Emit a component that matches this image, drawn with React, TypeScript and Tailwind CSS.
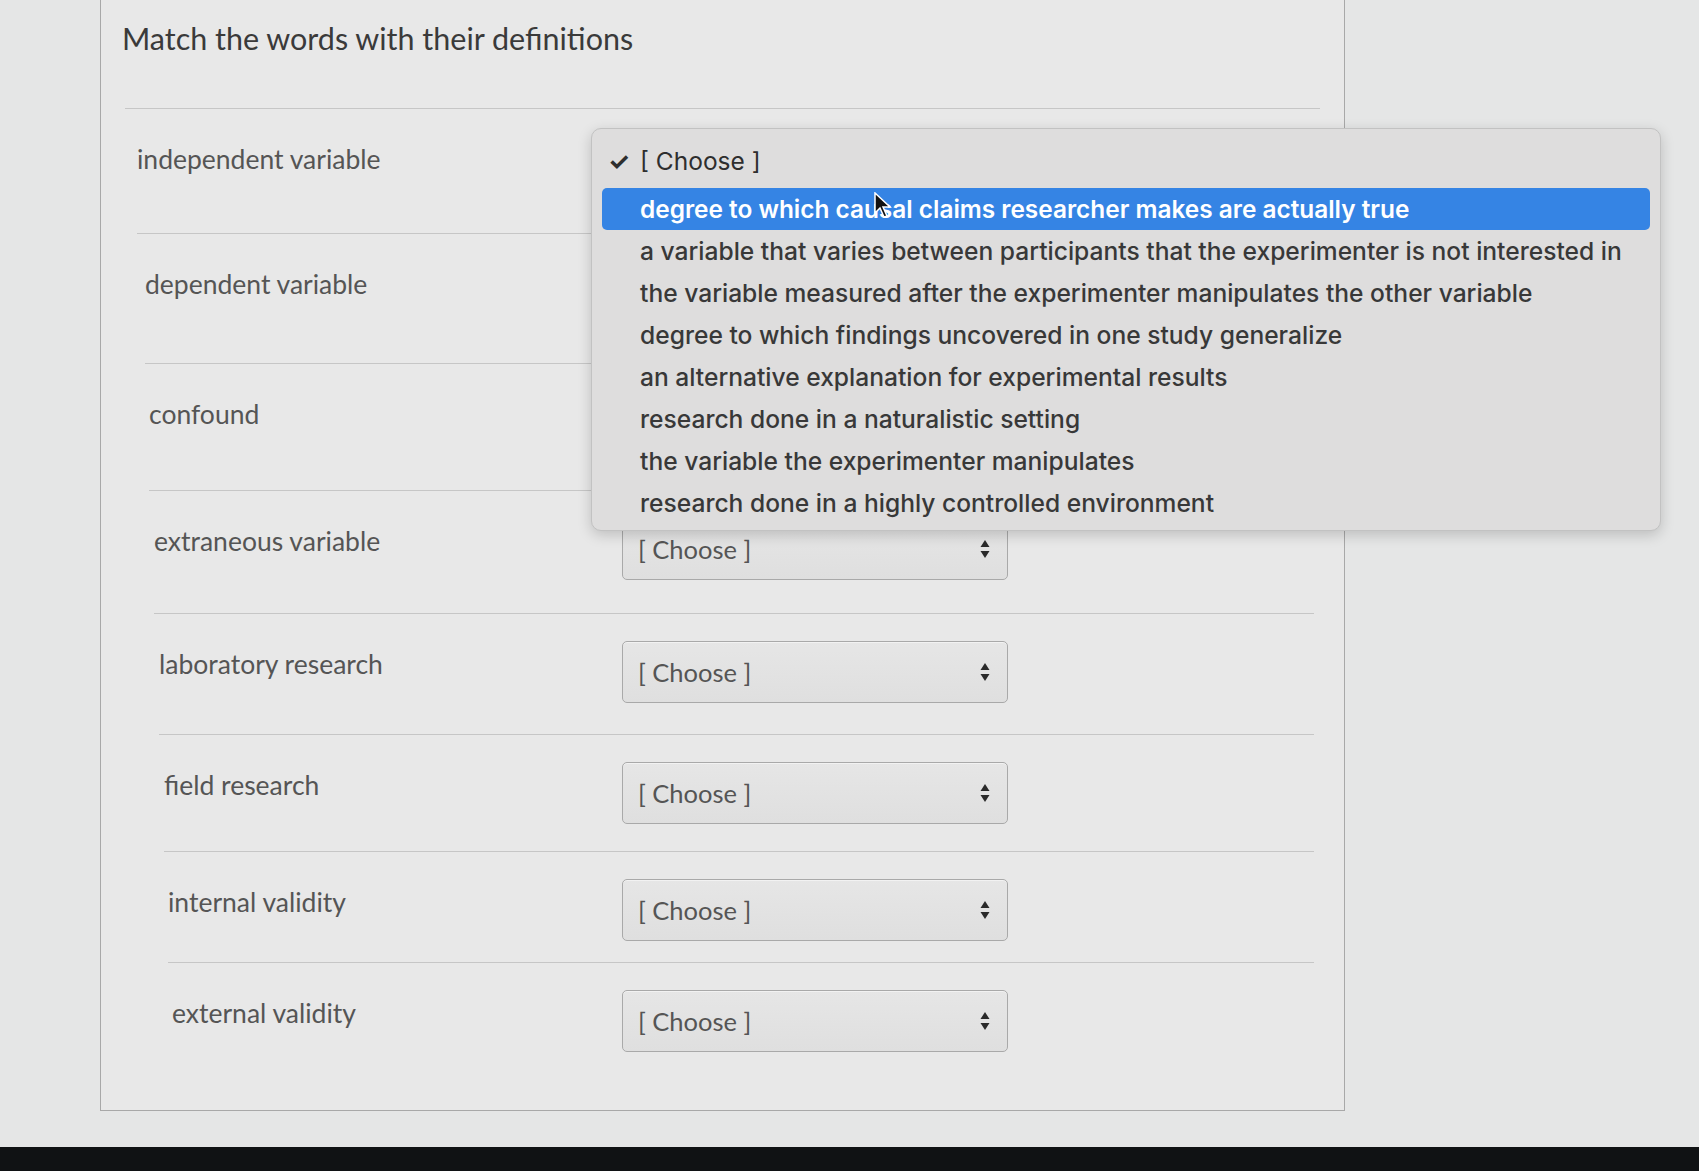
import React from 'react'

const rows = [
  { label: 'independent variable', h: 'h-[125px]', pl: 'pl-[36px]', lw: 'w-[485px]', hidden: true },
  { label: 'dependent variable', h: 'h-[130px]', pl: 'pl-[44px]', lw: 'w-[477px]', hidden: true },
  { label: 'confound', h: 'h-[127px]', pl: 'pl-[48px]', lw: 'w-[473px]', hidden: true },
  { label: 'extraneous variable', h: 'h-[123px]', pl: 'pl-[53px]', lw: 'w-[468px]' },
  { label: 'laboratory research', h: 'h-[121px]', pl: 'pl-[58px]', lw: 'w-[463px]' },
  { label: 'field research', h: 'h-[117px]', pl: 'pl-[63px]', lw: 'w-[458px]' },
  { label: 'internal validity', h: 'h-[111px]', pl: 'pl-[67px]', lw: 'w-[454px]' },
  { label: 'external validity', h: 'h-[149px]', pl: 'pl-[71px]', lw: 'w-[450px]', last: true },
]

const options = [
  'degree to which causal claims researcher makes are actually true',
  'a variable that varies between participants that the experimenter is not interested in',
  'the variable measured after the experimenter manipulates the other variable',
  'degree to which findings uncovered in one study generalize',
  'an alternative explanation for experimental results',
  'research done in a naturalistic setting',
  'the variable the experimenter manipulates',
  'research done in a highly controlled environment',
]

function Arrows() {
  return (
    <svg width="10" height="20" viewBox="0 0 10 20" className="text-[#2a2a2a]">
      <path d="M5 1 L9.5 8 L0.5 8 Z" fill="currentColor" />
      <path d="M5 19 L9.5 12 L0.5 12 Z" fill="currentColor" />
    </svg>
  )
}

function ChooseSelect() {
  return (
    <div className="flex h-[62px] w-[386px] items-center justify-between rounded-[5px] border border-[#a9a9a9] bg-gradient-to-b from-[#e6e6e6] to-[#dfdfdf] pl-[15px] pr-[17px] shadow-[inset_0_1px_0_#f2f2f2]">
      <span className="text-[25.5px] text-[#555]">[ Choose ]</span>
      <Arrows />
    </div>
  )
}

function Dropdown() {
  return (
    <div className="absolute left-[591px] top-[128px] z-10 w-[1070px] rounded-[10px] border border-[#c2c2c2] bg-[#dedddd] pb-[6px] pt-[11px] shadow-[0_4px_14px_rgba(0,0,0,0.18)] font-['Inter',Roboto,sans-serif]">
      <div className="flex h-[42px] items-center pl-[16px] text-[24.5px] text-[#2e2e2e]">
        <span className="w-[32px] font-bold">✓</span>
        <span>[ Choose ]</span>
      </div>
      <div className="mt-[6px]">
        {options.map((o, i) => (
          <div
            key={o}
            className={
              i === 0
                ? 'relative mx-[10px] flex h-[42px] items-center rounded-[5px] bg-[#3584e4] pl-[38px] text-[24.4px] font-semibold text-white'
                : 'mx-[10px] flex h-[42px] items-center pl-[38px] text-[24.6px] font-medium text-[#383838]'
            }
          >
            {o}
            {i === 0 && (
              <svg className="absolute left-[272px] top-[4px]" width="18" height="28" viewBox="0 0 18 28">
                <path d="M1 1 L1 21 L6 16 L10 25 L13 24 L9 15 L16 15 Z" fill="#111" stroke="#fff" strokeWidth="1.5" />
              </svg>
            )}
          </div>
        ))}
      </div>
    </div>
  )
}

export default function App() {
  return (
    <div className="relative h-[1171px] w-[1699px] overflow-hidden bg-[#e5e6e6] font-['Lato','Open_Sans',sans-serif]">
      <div className="ml-[100px] h-[1111px] w-[1245px] border-b border-l border-r border-[#a8a8a8] bg-[#e8e8e8]">
        <div className="h-[108px] pl-[21px] pt-[16px]">
          <h1 className="text-[30.5px] text-[#3a3a3a]">Match the words with their definitions</h1>
        </div>
        <div className="mx-[24px] border-t border-[#c6c6c6]" />
        {rows.map((r) => (
          <div key={r.label} className={`${r.h} ${r.pl} pr-[30px]`}>
            <div className={r.last ? 'flex h-full' : 'flex h-full border-b border-[#c6c6c6]'}>
              <div className={`${r.lw} pt-[31px] text-[26.5px] text-[#555]`}>{r.label}</div>
              {!r.hidden && (
                <div className="pt-[27px]">
                  <ChooseSelect />
                </div>
              )}
            </div>
          </div>
        ))}
      </div>
      <div className="mt-[36px] h-[24px] bg-[#101214]" />
      <Dropdown />
    </div>
  )
}
